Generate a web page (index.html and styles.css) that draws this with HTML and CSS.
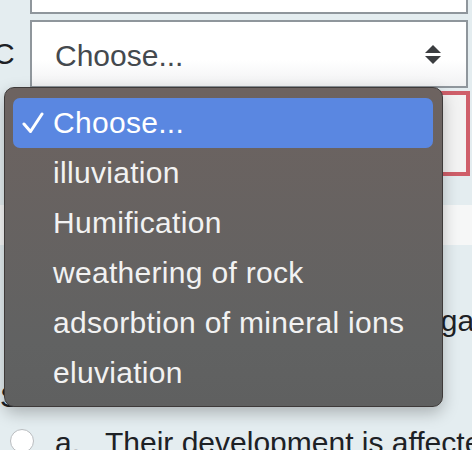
FILE: index.html
```html
<!DOCTYPE html>
<html lang="en">
<head>
    <meta charset="UTF-8">
    <title>Quiz - Select</title>
    <link rel="stylesheet" href="styles.css">
</head>
<body>
    <div class="page">
        <div class="field field-top"></div>

        <div class="select-row">
            <span class="row-label">C</span>
            <div class="select">
                <span class="select-value">Choose...</span>
                <svg class="select-arrows" width="16" height="19" viewBox="0 0 16 19">
                    <path d="M8 0 L16 8 L0 8 Z" fill="#3b3d40"/>
                    <path d="M0 11 L16 11 L8 19 Z" fill="#3b3d40"/>
                </svg>
            </div>
        </div>

        <div class="invalid-row">
            <div class="invalid-box"></div>
        </div>

        <div class="band band-white"></div>

        <p class="question">Which of these is not part of organic</p>
        <p class="prompt">Select one:</p>

        <div class="option">
            <span class="radio"></span>
            <span class="option-letter">a.</span>
            <span class="option-text">Their development is affected by climate</span>
        </div>
    </div>

    <!-- native select popup, drawn open -->
    <div class="menu">
        <div class="menu-item selected">
            <svg class="check" width="22" height="22" viewBox="0 0 22 22">
                <path d="M2 12 L8.5 19.5 L20 2" fill="none" stroke="#fff" stroke-width="3" stroke-linecap="round" stroke-linejoin="round"/>
            </svg>
            Choose...
        </div>
        <div class="menu-item">illuviation</div>
        <div class="menu-item">Humification</div>
        <div class="menu-item">weathering of rock</div>
        <div class="menu-item">adsorbtion of mineral ions</div>
        <div class="menu-item">eluviation</div>
    </div>
</body>
</html>
```

FILE: styles.css
```css
* {
    margin: 0;
    padding: 0;
    box-sizing: border-box;
}

body {
    font-family: 'Liberation Sans', Arial, sans-serif;
    background: #e4edf0;
    color: #1d2125;
    width: 472px;
    height: 450px;
    overflow: hidden;
    position: relative;
}

.page {
    display: flex;
    flex-direction: column;
}

.field {
    background: #fff;
    border: 2px solid #8f969c;
}

.field-top {
    margin: -20px 0 0 30px;
    width: 438px;
    height: 34px;
}

.select-row {
    display: flex;
    align-items: center;
    margin-top: 6px;
}

.row-label {
    width: 37px;
    margin-left: -7px;
    font-size: 30px;
    color: #1d2125;
    line-height: 68px;
}

.select {
    width: 438px;
    height: 68px;
    border: 2px solid #8f969c;
    background: linear-gradient(#ffffff 60%, #f1f2f3);
    display: flex;
    align-items: center;
    justify-content: space-between;
    padding: 0 25px 0 23px;
}

.select-value {
    font-size: 30px;
    color: #44494e;
    padding-top: 4px;
}

.invalid-row {
    display: flex;
    justify-content: flex-end;
    margin-top: 3px;
    padding-right: 2px;
}

.invalid-box {
    width: 60px;
    height: 85px;
    border: 4px solid #cf5f6a;
    background: #f3f3f3;
}

.band {
    height: 40px;
}

.band-white {
    margin-top: 29px;
    background: #f6f7f7;
}

.question {
    margin-top: 59px;
    padding-left: 34px;
    font-size: 30px;
    white-space: nowrap;
    line-height: 34px;
}

.prompt {
    margin-top: 42px;
    padding-left: 0;
    font-size: 30px;
    line-height: 34px;
}

.option {
    display: flex;
    align-items: flex-start;
    margin-top: 12px;
    white-space: nowrap;
    font-size: 30px;
    line-height: 34px;
}

.radio {
    width: 24px;
    height: 24px;
    margin: 3px 0 0 10px;
    border: 1px solid #b9bcbf;
    border-radius: 50%;
    background: #fff;
    flex-shrink: 0;
}

.option-letter {
    margin-left: 21px;
    width: 50px;
    flex-shrink: 0;
}

.menu {
    position: absolute;
    left: 4px;
    top: 87px;
    width: 439px;
    height: 320px;
    padding: 10px 9px 10px 8px;
    border-radius: 10px;
    border: 1px solid #3e3a39;
    background: linear-gradient(#6d6360, #616262 80%, #5f6060);
    box-shadow: 0 6px 16px rgba(0, 0, 0, 0.25);
}

.menu-item {
    height: 50px;
    display: flex;
    align-items: center;
    padding-left: 40px;
    font-size: 30px;
    letter-spacing: 0.3px;
    color: #f2f2f2;
    position: relative;
}

.menu-item.selected {
    background: #5a87e1;
    border-radius: 7px;
    color: #fff;
}

.check {
    position: absolute;
    left: 9px;
    top: 14px;
}
```
